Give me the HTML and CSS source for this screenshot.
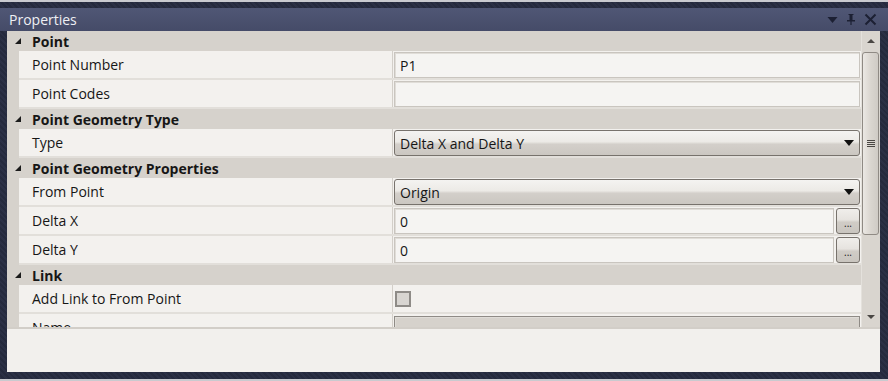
FILE: index.html
```html
<!DOCTYPE html>
<html lang="en">
<head>
    <meta charset="UTF-8">
    <title>Properties</title>
    <link rel="stylesheet" href="styles.css">
</head>
<body>
<div class="window">
    <div class="titlebar">
        <div class="title">Properties</div>
        <div class="tools">
            <svg width="11" height="8" viewBox="0 0 11 8"><path d="M0.5 1h10L5.5 7z" fill="#1c2033"/></svg>
            <svg width="10" height="13" viewBox="0 0 10 13"><path d="M2.5 1h5v1h-1v5h2.5v1.5H5.6V12H4.4V8.5H1V7h2.5V2h-1z" fill="#1c2033"/></svg>
            <svg width="13" height="13" viewBox="0 0 13 13"><path d="M1.5 1.5l10 10M11.5 1.5l-10 10" stroke="#1c2033" stroke-width="2"/></svg>
        </div>
    </div>
    <div class="grid">
        <div class="rows">
            <div class="category"><span class="toggle"></span>Point</div>
            <div class="prop">
                <div class="name">Point Number</div>
                <div class="value"><div class="text">P1</div></div>
            </div>
            <div class="prop">
                <div class="name">Point Codes</div>
                <div class="value"><div class="text"></div></div>
            </div>
            <div class="category"><span class="toggle"></span>Point Geometry Type</div>
            <div class="prop">
                <div class="name">Type</div>
                <div class="value"><div class="combo">Delta X and Delta Y<span class="arrow"></span></div></div>
            </div>
            <div class="category"><span class="toggle"></span>Point Geometry Properties</div>
            <div class="prop">
                <div class="name">From Point</div>
                <div class="value"><div class="combo">Origin<span class="arrow"></span></div></div>
            </div>
            <div class="prop">
                <div class="name">Delta X</div>
                <div class="value"><div class="text">0</div><div class="dots">...</div></div>
            </div>
            <div class="prop">
                <div class="name">Delta Y</div>
                <div class="value"><div class="text">0</div><div class="dots">...</div></div>
            </div>
            <div class="category"><span class="toggle"></span>Link</div>
            <div class="prop">
                <div class="name">Add Link to From Point</div>
                <div class="value"><div class="check"></div></div>
            </div>
            <div class="prop">
                <div class="name">Name</div>
                <div class="value"><div class="text disabled"></div></div>
            </div>
        </div>
        <div class="scrollbar">
            <div class="sbtn"><span class="up"></span></div>
            <div class="track">
                <div class="thumb"><div class="grip"></div></div>
            </div>
            <div class="sbtn"><span class="down"></span></div>
        </div>
    </div>
    <div class="desc"></div>
</div>
</body>
</html>
```

FILE: styles.css
```css
* {
    margin: 0;
    padding: 0;
    box-sizing: border-box;
}

body {
    width: 888px;
    height: 381px;
    overflow: hidden;
    background: #2a2e43;
    font-family: "Open Sans", "Noto Sans", sans-serif;
    font-size: 14px;
    color: #161616;
}

.window {
    height: 381px;
    padding: 8px 8px 7px 7px;
    border-top: 2px solid #c9cacf;
    border-bottom: 2px solid #c9cacf;
    background: repeating-linear-gradient(45deg, #2b3045 0, #2b3045 2px, #252a3d 2px, #252a3d 4px);
    display: flex;
    flex-direction: column;
}

.titlebar {
    height: 23px;
    margin-top: -2px;
    margin-left: -7px;
    margin-right: -8px;
    padding: 0 11px 0 9px;
    display: flex;
    align-items: center;
    justify-content: space-between;
    background: linear-gradient(#505775, #454b68);
}

.title {
    color: #eef0f4;
    font-size: 14px;
}

.tools {
    display: flex;
    align-items: center;
    gap: 8px;
}

.grid {
    height: 296px;
    display: flex;
    background: #d6d2cc;
    overflow: hidden;
}

.rows {
    flex: 1;
    overflow: hidden;
}

.category {
    height: 20px;
    display: flex;
    align-items: center;
    padding-left: 25px;
    position: relative;
    font-weight: 700;
    background: #d6d2cc;
}

.toggle {
    position: absolute;
    left: 8px;
    top: 7px;
    width: 0;
    height: 0;
    border-left: 6px solid transparent;
    border-bottom: 6px solid #1b1b1b;
}

.prop {
    height: 29px;
    margin-left: 12px;
    display: flex;
    background: #f3f1ee;
    border-bottom: 2px solid #e2dfda;
}

.name {
    width: 374px;
    padding-left: 13px;
    display: flex;
    align-items: center;
    white-space: nowrap;
    border-right: 1px solid #d3cfc9;
}

.value {
    flex: 1;
    display: flex;
    gap: 2px;
    padding: 1px 1px 0 1px;
    align-items: center;
}

.text {
    flex: 1;
    height: 26px;
    display: flex;
    align-items: center;
    padding-left: 5px;
    background: #f5f4f2;
    border: 1px solid #c9c5bf;
    box-shadow: inset 1px 1px 0 #e0ddd8;
}

.text.disabled {
    background: #d6d2cc;
    border-color: #8f8b86;
    margin-top: 2px;
}

.combo {
    flex: 1;
    height: 26px;
    display: flex;
    align-items: center;
    justify-content: space-between;
    padding: 0 5px 0 5px;
    border: 1px solid #77726c;
    border-radius: 3px;
    background: linear-gradient(#f4f3f1 0, #eceae6 45%, #d3cfca 55%, #cbc7c1 100%);
}

.arrow {
    width: 0;
    height: 0;
    border-left: 5px solid transparent;
    border-right: 5px solid transparent;
    border-top: 6px solid #111;
}

.dots {
    width: 24px;
    height: 26px;
    display: flex;
    align-items: flex-end;
    justify-content: center;
    padding-bottom: 5px;
    font-size: 10px;
    line-height: 10px;
    border: 1px solid #77726c;
    border-radius: 3px;
    background: linear-gradient(#f0eeeb 0, #e6e3df 45%, #d0ccc6 55%, #c9c5bf 100%);
}

.check {
    width: 16px;
    height: 16px;
    margin-left: 1px;
    border: 2px solid #8e8b87;
    background: #d8d5d1;
}

.scrollbar {
    width: 19px;
    display: flex;
    flex-direction: column;
    background: #d9d5cf;
    border-left: 1px solid #e4e1dc;
}

.sbtn {
    height: 20px;
    display: flex;
    align-items: center;
    justify-content: center;
}

.up {
    border-left: 4px solid transparent;
    border-right: 4px solid transparent;
    border-bottom: 4px solid #4a4744;
}

.down {
    border-left: 4px solid transparent;
    border-right: 4px solid transparent;
    border-top: 4px solid #4a4744;
}

.track {
    flex: 1;
    padding-top: 1px;
}

.thumb {
    width: 17px;
    height: 183px;
    border: 1px solid #8f8a84;
    border-radius: 3px;
    background: linear-gradient(90deg, #ebe8e4, #dad6d0 50%, #cfcbc5);
    display: flex;
    align-items: center;
    justify-content: center;
}

.grip {
    width: 8px;
    height: 7px;
    background: repeating-linear-gradient(#4a4744 0, #4a4744 1px, transparent 1px, transparent 2px);
}

.desc {
    flex: 1;
    background: #f2f0ed;
    border-top: 2px solid #d2cec8;
}
```
